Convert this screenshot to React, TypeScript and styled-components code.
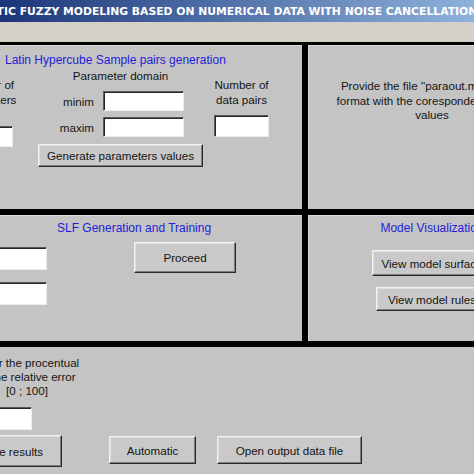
import styled, { createGlobalStyle } from 'styled-components';

const GlobalStyle = createGlobalStyle`
  html, body {
    margin: 0;
    padding: 0;
    background: #c4c4c4;
  }
  body {
    font-family: 'Liberation Sans', Arial, sans-serif;
    font-size: 11.6px;
    color: #141414;
  }
  * {
    box-sizing: border-box;
  }
`;

const Viewport = styled.div`
  width: 474px;
  height: 474px;
  overflow: hidden;
  background: #c4c4c4;
`;

// the figure window is wider than the shot, so it is shifted left and clipped
const Window = styled.div`
  width: 640px;
  margin-left: -70px;
  display: flex;
  flex-direction: column;
`;

const TitleBar = styled.div`
  height: 22px;
  display: flex;
  align-items: center;
  padding-left: 15px;
  background: linear-gradient(to right, #0a246a, #a6caf0);
  color: #fff;
  font-family: 'DejaVu Sans', Verdana, sans-serif;
  font-weight: bold;
  font-size: 10.8px;
  white-space: nowrap;
`;

const MenuStrip = styled.div`
  height: 20px;
  background: #d4d0c8;
`;

const PanelGrid = styled.div`
  display: grid;
  grid-template-columns: 375px 254px;
  grid-template-rows: 170px 132px;
`;

const Panel = styled.section<{ $center?: boolean }>`
  display: flex;
  flex-direction: column;
  align-items: ${(p) => (p.$center ? 'center' : 'flex-start')};
  border: 3px solid #000;
  background: #c4c4c4;
  box-shadow: inset 1px 1px 0 #dadada;
`;

const Heading = styled.div<{ $indent?: number; $top: number }>`
  margin-top: ${(p) => p.$top}px;
  margin-left: ${(p) => p.$indent ?? 0}px;
  color: #1e1ed6;
  font-size: 12px;
  line-height: 14px;
  white-space: nowrap;
`;

const Row = styled.div<{ $pad?: number }>`
  display: flex;
  align-items: flex-start;
  padding-left: ${(p) => p.$pad ?? 0}px;
`;

const Group = styled.div<{ $w: number; $top: number; $left?: number }>`
  display: flex;
  flex-direction: column;
  align-items: center;
  width: ${(p) => p.$w}px;
  margin-top: ${(p) => p.$top}px;
  margin-left: ${(p) => p.$left ?? 0}px;
`;

const Label = styled.div<{ $lh?: number }>`
  text-align: center;
  line-height: ${(p) => p.$lh ?? 15}px;
  white-space: nowrap;
`;

const BoundRow = styled.div<{ $top: number }>`
  display: flex;
  align-items: center;
  justify-content: flex-end;
  gap: 9px;
  align-self: stretch;
  padding-right: 19px;
  margin-top: ${(p) => p.$top}px;
`;

const Field = styled.input<{ $w: number; $h: number; $top?: number; $left?: number }>`
  width: ${(p) => p.$w}px;
  height: ${(p) => p.$h}px;
  margin: ${(p) => p.$top ?? 0}px 0 0 ${(p) => p.$left ?? 0}px;
  padding: 0 3px;
  background: #fff;
  border: 1px solid;
  border-color: #5a5a5a #ececec #ececec #5a5a5a;
  box-shadow: inset 1px 1px 0 #262626;
  font: inherit;
  outline: none;
`;

const Button = styled.button<{ $w: number; $h: number; $top?: number; $left?: number }>`
  width: ${(p) => p.$w}px;
  height: ${(p) => p.$h}px;
  margin: ${(p) => p.$top ?? 0}px 0 0 ${(p) => p.$left ?? 0}px;
  padding: 0;
  flex-shrink: 0;
  background: #c9c9c9;
  border: 1px solid;
  border-color: #f2f2f2 #2a2a2a #2a2a2a #f2f2f2;
  box-shadow: inset -1px -1px 0 #7c7c7c, inset 1px 1px 0 #dedede;
  color: #141414;
  font-family: 'Liberation Sans', Arial, sans-serif;
  font-size: 11.6px;
  white-space: nowrap;
`;

const Note = styled.div`
  margin-top: 34px;
  align-self: stretch;
  text-align: center;
  line-height: 14.5px;
  white-space: nowrap;
`;

const BottomSection = styled.section`
  display: flex;
  flex-direction: column;
  align-items: flex-start;
  height: 140px;
  border-top: 3px solid #000;
  background: #c4c4c4;
`;

const ErrorGroup = styled.div`
  display: flex;
  flex-direction: column;
  align-items: flex-start;
  width: 150px;
  margin-left: 22px;
  padding-top: 9px;
`;

const ErrorText = styled.div`
  align-self: stretch;
  text-align: center;
  line-height: 14px;
  white-space: nowrap;
`;

export default function App() {
  return (
    <Viewport>
      <GlobalStyle />
      <Window>
        <TitleBar>AUTOMATIC FUZZY MODELING BASED ON NUMERICAL DATA WITH NOISE CANCELLATION</TitleBar>
        <MenuStrip />
        <PanelGrid>
          <Panel>
            <Heading $indent={72} $top={8}>
              Latin Hypercube Sample pairs generation
            </Heading>
            <Row $pad={28}>
              <Group $w={52} $top={10}>
                <Label>
                  Number of
                  <br />
                  parameters
                </Label>
                <Field $w={52} $h={21} $top={19} />
              </Group>
              <Group $w={165} $top={2} $left={25}>
                <Label $lh={14}>Parameter domain</Label>
                <BoundRow $top={8}>
                  <span>minim</span>
                  <Field $w={81} $h={20} />
                </BoundRow>
                <BoundRow $top={6}>
                  <span>maxim</span>
                  <Field $w={81} $h={20} />
                </BoundRow>
                <Button $w={165} $h={23} $top={7}>
                  Generate parameters values
                </Button>
              </Group>
              <Group $w={55} $top={10} $left={11}>
                <Label>
                  Number of
                  <br />
                  data pairs
                </Label>
                <Field $w={55} $h={22} $top={8} />
              </Group>
            </Row>
          </Panel>

          <Panel>
            <Note>
              Provide the file ''paraout.mat'' in the
              <br />
              format with the corespondent outputs
              <br />
              values
            </Note>
          </Panel>

          <Panel>
            <Heading $indent={124} $top={6}>
              SLF Generation and Training
            </Heading>
            <Row>
              <Group $w={60} $top={0} $left={54}>
                <Field $w={60} $h={23} $top={12} />
                <Field $w={60} $h={23} $top={12} />
              </Group>
              <Button $w={102} $h={31} $top={7} $left={87}>
                Proceed
              </Button>
            </Row>
          </Panel>

          <Panel $center>
            <Heading $top={6}>Model Visualization</Heading>
            <Button $w={120} $h={26} $top={15}>
              View model surface
            </Button>
            <Button $w={112} $h={24} $top={11}>
              View model rules
            </Button>
          </Panel>
        </PanelGrid>

        <BottomSection>
          <ErrorGroup>
            <ErrorText>
              Enter the procentual
              <br />
              of the relative error
              <br />
              [0 ; 100]
            </ErrorText>
            <Field $w={62} $h={23} $top={9} $left={18} />
          </ErrorGroup>
          <Row $pad={9}>
            <Button $w={123} $h={32} $top={5}>
              Compare results
            </Button>
            <Button $w={87} $h={28} $top={6} $left={47}>
              Automatic
            </Button>
            <Button $w={145} $h={28} $top={6} $left={21}>
              Open output data file
            </Button>
          </Row>
        </BottomSection>
      </Window>
    </Viewport>
  );
}
